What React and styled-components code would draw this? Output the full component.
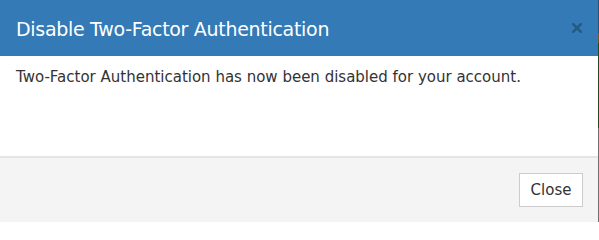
import React from "react";
import styled, { createGlobalStyle } from "styled-components";

const GlobalStyle = createGlobalStyle`
  html, body {
    margin: 0;
    padding: 0;
    background: #fff;
  }
  body {
    font-family: "DejaVu Sans", "Liberation Sans", sans-serif;
  }
`;

// the page behind the dialog shows through the last pixel column
const Page = styled.div`
  width: 599px;
  height: 222px;
  overflow: hidden;
  background: linear-gradient(
    to bottom,
    #24527d 0,
    #24527d 33px,
    #6b5c2c 33px,
    #6b5c2c 43px,
    #1c4a22 43px,
    #1c4a22 128px,
    #707070 128px
  );
`;

const Modal = styled.div`
  width: 598px;
  height: 222px;
  background: #fff;
  display: flex;
  flex-direction: column;
`;

const Header = styled.div`
  height: 56px;
  box-sizing: border-box;
  background-color: #337ab7;
  padding: 0 16px;
  display: flex;
  align-items: center;
  justify-content: space-between;
`;

const Title = styled.h4`
  margin: 0;
  font-size: 19px;
  font-weight: 400;
  color: #fff;
  letter-spacing: -0.3px;
  line-height: 1;
  padding-top: 2px;
`;

const CloseX = styled.button`
  border: 0;
  background: none;
  padding: 0;
  margin-right: -1px;
  width: 12px;
  height: 12px;
  display: flex;
  align-items: center;
  justify-content: center;
  opacity: 0.25;
  cursor: pointer;
`;

const Body = styled.div`
  flex: 1;
  padding: 11px 16px;
  font-size: 15px;
  line-height: 1.4;
  color: #333;
`;

const Footer = styled.div`
  height: 66px;
  box-sizing: border-box;
  border-top: 2px solid #e5e5e5;
  background-color: #f4f4f4;
  padding: 15px 15px 0;
  display: flex;
  justify-content: flex-end;
  align-items: flex-start;
`;

const Button = styled.button`
  width: 64px;
  height: 34px;
  box-sizing: border-box;
  background: #fff;
  border: 1px solid #ccc;
  border-radius: 0;
  font-family: inherit;
  font-size: 15px;
  color: #333;
  padding: 0;
  cursor: pointer;
`;

export default function App() {
  return (
    <Page>
      <GlobalStyle />
      <Modal>
        <Header>
          <Title>Disable Two-Factor Authentication</Title>
          <CloseX aria-label="Close">
            <svg width="10" height="10" viewBox="0 0 10 10">
              <path
                d="M1 1 L9 9 M9 1 L1 9"
                stroke="#000"
                strokeWidth="2.6"
                strokeLinecap="square"
              />
            </svg>
          </CloseX>
        </Header>
        <Body>
          Two-Factor Authentication has now been disabled for your account.
        </Body>
        <Footer>
          <Button>Close</Button>
        </Footer>
      </Modal>
    </Page>
  );
}
